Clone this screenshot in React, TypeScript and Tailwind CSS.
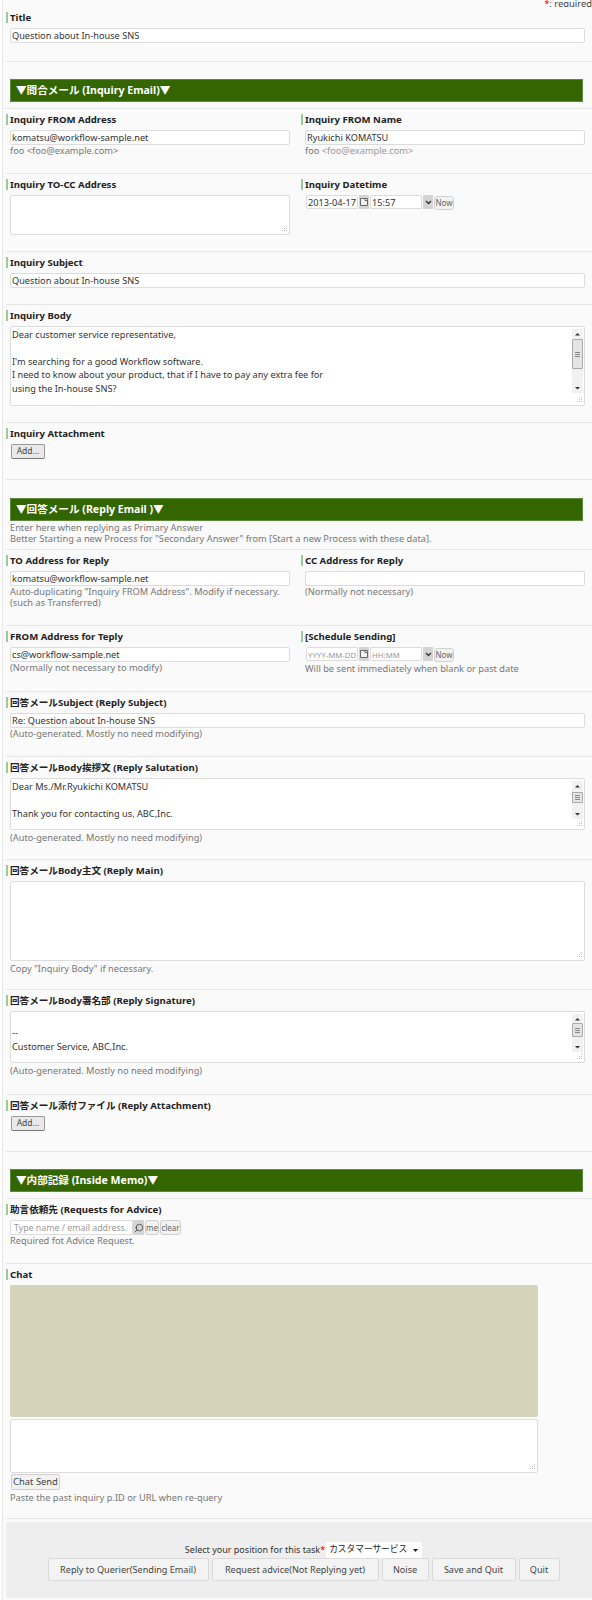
import React from 'react';
import { Search } from 'lucide-react';

const Label = ({ text }: { text: string }) => (
    <div className="h-[11px] border-l-2 border-[#99cc99] pl-[2px] text-[9.6px] leading-[11px] font-bold text-[#222] whitespace-nowrap">{text}</div>
);

const Hint = ({ children }: { children: React.ReactNode }) => (
    <div className="pl-[4px] text-[9.25px] leading-[11px] text-[#777] whitespace-nowrap">{children}</div>
);

const TextInput = ({ value, placeholder, className }: { value?: string; placeholder?: string; className: string }) => (
    <input
        readOnly
        defaultValue={value}
        placeholder={placeholder}
        className={`block h-[15px] border border-[#dcdcdc] rounded-[2px] bg-white px-[1px] text-[9.2px] text-[#333] placeholder:text-[#999] outline-none ${className}`}
    />
);

const Grip = () => (
    <svg width="8" height="8" viewBox="0 0 8 8" className="absolute right-[1px] bottom-[1px]" fill="#bbb">
        <rect x="6" y="1" width="1" height="1" />
        <rect x="4" y="3" width="1" height="1" />
        <rect x="6" y="3" width="1" height="1" />
        <rect x="2" y="5" width="1" height="1" />
        <rect x="4" y="5" width="1" height="1" />
        <rect x="6" y="5" width="1" height="1" />
    </svg>
);

const Scrollbar = ({ height, thumbTop, thumbHeight }: { height: number; thumbTop: number; thumbHeight: number }) => (
    <div className="absolute right-[1px] top-[2px] w-[11px] bg-[#f1f1f1]" style={{ height }}>
        <svg width="11" height="8" viewBox="0 0 11 8" className="absolute top-[1px] left-0" fill="#333">
            <path d="M3 5.5 5.5 3 8 5.5z" />
        </svg>
        <div className="absolute left-0 w-[11px] border border-[#aaa] rounded-[1px] bg-[#e4e4e4] flex flex-col items-center justify-center gap-[1px]" style={{ top: thumbTop, height: thumbHeight }}>
            <span className="block w-[5px] h-[1px] bg-[#888]" />
            <span className="block w-[5px] h-[1px] bg-[#888]" />
            <span className="block w-[5px] h-[1px] bg-[#888]" />
        </div>
        <svg width="11" height="8" viewBox="0 0 11 8" className="absolute bottom-[1px] left-0" fill="#333">
            <path d="M3 3 5.5 5.5 8 3z" />
        </svg>
    </div>
);

const TextArea = ({ value, className, children }: { value?: string; className: string; children?: React.ReactNode }) => (
    <div className={`relative border border-[#dcdcdc] rounded-[2px] bg-white ${className}`}>
        <textarea
            readOnly
            defaultValue={value}
            className="block w-full h-full resize-none overflow-hidden bg-transparent px-[1px] pt-[1px] text-[9.2px] leading-[13.4px] text-[#333] outline-none"
        />
        {children}
        <Grip />
    </div>
);

const SmallBtn = ({ text, className }: { text: string; className: string }) => (
    <button className={`border border-[#d0d0d0] rounded-[3px] bg-[#f2f2f2] text-[8px] leading-none text-[#666] ${className}`}>{text}</button>
);

const AddBtn = () => (
    <button className="block ml-[1px] w-[34px] h-[15px] border border-[#999] border-b-[#777] rounded-[2px] bg-[#e9e9e9] text-[8.5px] leading-none text-[#444]">Add...</button>
);

const Calendar = () => (
    <span className="flex w-[10px] h-[14px] items-center justify-center bg-[#d4d4d4]">
        <svg width="8" height="8" viewBox="0 0 8 8" fill="#f4f4f4" stroke="#666" strokeWidth="1">
            <path d="M.5.5h7v7h-7z" />
            <path d="M5 .5v2h2.5" fill="none" />
        </svg>
    </span>
);

const Arrow = () => (
    <span className="flex w-[10px] h-[14px] items-center justify-center bg-[#d4d4d4]">
        <svg width="7" height="5" viewBox="0 0 7 5" fill="none" stroke="#333" strokeWidth="1.4">
            <path d="M1 1 3.5 3.5 6 1" />
        </svg>
    </span>
);

const DateTime = ({ date, time, placeholder }: { date?: string; time?: string; placeholder?: boolean }) => (
    <div className="flex items-start ml-[1px]">
        <TextInput className="w-[52px] !h-[14px] placeholder:text-[7.8px]" value={date} placeholder={placeholder ? 'YYYY-MM-DD' : undefined} />
        <span className="ml-[1px]"><Calendar /></span>
        <TextInput className="w-[52px] !h-[14px] ml-[1px] placeholder:text-[7.8px]" value={time} placeholder={placeholder ? 'HH:MM' : undefined} />
        <span className="ml-[1px]"><Arrow /></span>
        <SmallBtn text="Now" className="w-[20px] h-[14px] ml-[1px] mt-[1px]" />
    </div>
);

const Row = ({ className, children }: { className: string; children: React.ReactNode }) => (
    <div className={`box-border border-b border-[#e6e6e6] pt-[5px] ${className}`}>{children}</div>
);

const Field = ({ label, className, children }: { label: string; className?: string; children: React.ReactNode }) => (
    <div className={className}>
        <Label text={label} />
        <div className="mt-[5px]">{children}</div>
    </div>
);

const Full = ({ className, children }: { className?: string; children: React.ReactNode }) => (
    <div className={`ml-[4px] ${className ?? ''}`}>{children}</div>
);

const GreenBar = ({ text }: { text: string }) => (
    <div className="ml-[4px] w-[573px] h-[23px] bg-[#336600] border border-[#5c8a3c] pl-[5px] text-[10.6px] leading-[21px] font-bold text-white whitespace-nowrap">{text}</div>
);

const FooterBtn = ({ text, className }: { text: string; className: string }) => (
    <button className={`h-[23px] border border-[#dadada] rounded-[2px] bg-[#f3f3f3] text-[9.1px] text-[#444] ${className}`}>{text}</button>
);

const inquiryBody = `Dear customer service representative,

I'm searching for a good Workflow software.
I need to know about your product, that if I have to pay any extra fee for
using the In-house SNS?`;

export default function App() {
    return (
        <div className="w-[592px] h-[1600px] overflow-hidden bg-white font-['Noto_Sans','Noto_Sans_CJK_JP',sans-serif]">
            <div className="ml-[2px] h-full border-l border-[#e8e8e8] bg-[#fafafa] pl-[3px]">
                <div className="h-[7px] text-right text-[9.4px] leading-[7px] text-[#444] whitespace-nowrap overflow-hidden"><span className="text-[#cc0000]">*</span>: required</div>

                <Row className="h-[55px]">
                    <Field label="Title"><Full><TextInput className="w-[575px]" value="Question about In-house SNS" /></Full></Field>
                </Row>

                <Row className="h-[47px] !pt-[17px]"><GreenBar text="▼問合メール (Inquiry Email)▼" /></Row>

                <Row className="h-[65px] flex">
                    <Field label="Inquiry FROM Address" className="w-[295px]">
                        <Full><TextInput className="w-[280px]" value="komatsu@workflow-sample.net" /></Full>
                        <Hint>foo &lt;foo@example.com&gt;</Hint>
                    </Field>
                    <Field label="Inquiry FROM Name" className="flex-1">
                        <Full><TextInput className="w-[280px]" value="Ryukichi KOMATSU" /></Full>
                        <Hint>foo <span className="text-[#999]">&lt;foo@example.com&gt;</span></Hint>
                    </Field>
                </Row>

                <Row className="h-[78px] flex">
                    <Field label="Inquiry TO-CC Address" className="w-[295px]">
                        <Full><TextArea className="w-[280px] h-[40px]" /></Full>
                    </Field>
                    <Field label="Inquiry Datetime" className="flex-1">
                        <Full><DateTime date="2013-04-17" time="15:57" /></Full>
                    </Field>
                </Row>

                <Row className="h-[53px]">
                    <Field label="Inquiry Subject"><Full><TextInput className="w-[575px]" value="Question about In-house SNS" /></Full></Field>
                </Row>

                <Row className="h-[118px]">
                    <Field label="Inquiry Body">
                        <Full>
                            <TextArea className="w-[575px] h-[80px]" value={inquiryBody}>
                                <Scrollbar height={64} thumbTop={10} thumbHeight={30} />
                            </TextArea>
                        </Full>
                    </Field>
                </Row>

                <Row className="h-[57px]">
                    <Field label="Inquiry Attachment"><Full><AddBtn /></Full></Field>
                </Row>

                <Row className="h-[70px] !pt-[18px]">
                    <GreenBar text="▼回答メール (Reply Email )▼" />
                    <div className="mt-[1px]">
                        <Hint>Enter here when replying as Primary Answer</Hint>
                        <Hint>Better Starting a new Process for "Secondary Answer" from [Start a new Process with these data].</Hint>
                    </div>
                </Row>

                <Row className="h-[76px] flex">
                    <Field label="TO Address for Reply" className="w-[295px]">
                        <Full><TextInput className="w-[280px]" value="komatsu@workflow-sample.net" /></Full>
                        <Hint>Auto-duplicating "Inquiry FROM Address". Modify if necessary.</Hint>
                        <Hint>(such as Transferred)</Hint>
                    </Field>
                    <Field label="CC Address for Reply" className="flex-1">
                        <Full><TextInput className="w-[280px]" /></Full>
                        <Hint>(Normally not necessary)</Hint>
                    </Field>
                </Row>

                <Row className="h-[66px] flex">
                    <Field label="FROM Address for Teply" className="w-[295px]">
                        <Full><TextInput className="w-[280px]" value="cs@workflow-sample.net" /></Full>
                        <Hint>(Normally not necessary to modify)</Hint>
                    </Field>
                    <Field label="[Schedule Sending]" className="flex-1">
                        <Full><DateTime placeholder /></Full>
                        <div className="mt-[1px]"><Hint>Will be sent immediately when blank or past date</Hint></div>
                    </Field>
                </Row>

                <Row className="h-[65px]">
                    <Field label="回答メールSubject (Reply Subject)">
                        <Full><TextInput className="w-[575px]" value="Re: Question about In-house SNS" /></Full>
                        <Hint>(Auto-generated. Mostly no need modifying)</Hint>
                    </Field>
                </Row>

                <Row className="h-[103px]">
                    <Field label="回答メールBody挨拶文 (Reply Salutation)">
                        <Full>
                            <TextArea className="w-[575px] h-[52px]" value={'Dear Ms./Mr.Ryukichi KOMATSU\n\nThank you for contacting us, ABC,Inc.'}>
                                <Scrollbar height={38} thumbTop={11} thumbHeight={11} />
                            </TextArea>
                        </Full>
                        <div className="mt-[2px]"><Hint>(Auto-generated. Mostly no need modifying)</Hint></div>
                    </Field>
                </Row>

                <Row className="h-[130px]">
                    <Field label="回答メールBody主文 (Reply Main)">
                        <Full><TextArea className="w-[575px] h-[80px]" /></Full>
                        <div className="mt-[2px]"><Hint>Copy "Inquiry Body" if necessary.</Hint></div>
                    </Field>
                </Row>

                <Row className="h-[105px]">
                    <Field label="回答メールBody署名部 (Reply Signature)">
                        <Full>
                            <TextArea className="w-[575px] h-[52px]" value={'\n--\nCustomer Service, ABC,Inc.'}>
                                <Scrollbar height={38} thumbTop={9} thumbHeight={14} />
                            </TextArea>
                        </Full>
                        <div className="mt-[2px]"><Hint>(Auto-generated. Mostly no need modifying)</Hint></div>
                    </Field>
                </Row>

                <Row className="h-[57px]">
                    <Field label="回答メール添付ファイル (Reply Attachment)"><Full><AddBtn /></Full></Field>
                </Row>

                <Row className="h-[47px] !pt-[17px]"><GreenBar text="▼内部記録 (Inside Memo)▼" /></Row>

                <Row className="h-[65px]">
                    <Field label="助言依頼先 (Requests for Advice)">
                        <Full>
                            <div className="flex items-start">
                                <TextInput className="w-[123px] !px-[3px] placeholder:text-[8.8px]" placeholder="Type name / email address." />
                                <span className="flex w-[11px] h-[15px] items-center justify-center bg-[#d4d4d4]">
                                    <Search size={10} strokeWidth={2} color="#444" className="-scale-x-100" />
                                </span>
                                <SmallBtn text="me" className="w-[14px] h-[15px] ml-[1px]" />
                                <SmallBtn text="clear" className="w-[21px] h-[15px] ml-[1px]" />
                            </div>
                        </Full>
                        <Hint>Required fot Advice Request.</Hint>
                    </Field>
                </Row>

                <Row className="h-[255px]">
                    <Field label="Chat">
                        <Full>
                            <div className="w-[528px] h-[132px] rounded-[2px] bg-[#d5d3b9]" />
                            <TextArea className="w-[528px] h-[54px] mt-[2px]" />
                            <button className="block mt-[1px] ml-[1px] w-[49px] h-[16px] border border-[#d0d0d0] rounded-[2px] bg-[#f2f2f2] text-[9.4px] leading-none text-[#444] whitespace-nowrap">Chat Send</button>
                        </Full>
                        <div className="mt-[2px]"><Hint>Paste the past inquiry p.ID or URL when re-query</Hint></div>
                    </Field>
                </Row>

                <div className="mt-[3px] h-[76px] bg-[#eeeeee] pt-[20px] pl-[9px]">
                    <div className="flex h-[16px] items-center justify-center text-[9px] text-[#333]">
                        <span>Select your position for this task<span className="text-[#cc0000]">*</span></span>
                        <span className="ml-[1px] flex w-[96px] h-[16px] items-center justify-between bg-white pl-[3px] pr-[4px] text-[8.7px] text-[#222] whitespace-nowrap">
                            カスタマーサービス
                            <svg width="5" height="3" viewBox="0 0 5 3" fill="#222"><path d="M0 0h5L2.5 3z" /></svg>
                        </span>
                    </div>
                    <div className="flex justify-center gap-[3px]">
                        <FooterBtn text="Reply to Querier(Sending Email)" className="w-[161px]" />
                        <FooterBtn text="Request advice(Not Replying yet)" className="w-[167px]" />
                        <FooterBtn text="Noise" className="w-[47px]" />
                        <FooterBtn text="Save and Quit" className="w-[84px]" />
                        <FooterBtn text="Quit" className="w-[41px]" />
                    </div>
                </div>
            </div>
        </div>
    );
}
